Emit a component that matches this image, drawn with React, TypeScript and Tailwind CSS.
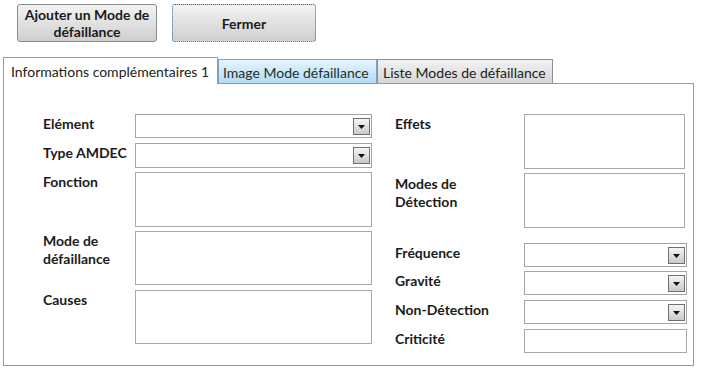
const font = { fontFamily: "Lato, 'Open Sans', sans-serif" };

function Combo({ className = "" }: { className?: string }) {
  return (
    <div className={`relative bg-white border border-[#a5a5a5] ${className}`}>
      <div className="absolute right-[1px] top-[3px] w-[17px] h-[17px] border border-[#6f6f6f] bg-gradient-to-b from-[#f6f6f6] to-[#c9c9c9] flex items-center justify-center">
        <svg width="7" height="4" viewBox="0 0 7 4">
          <path d="M0 0h7L3.5 4z" fill="#111" />
        </svg>
      </div>
    </div>
  );
}

function Box({ className = "" }: { className?: string }) {
  return <div className={`bg-white border border-[#a9a9a9] ${className}`} />;
}

function Label({ children, className = "" }: { children: React.ReactNode; className?: string }) {
  return <div className={`font-bold text-[14px] leading-[18px] text-[#1b1b1b] pt-[1px] ${className}`}>{children}</div>;
}

export default function App() {
  return (
    <div className="w-[724px] h-[390px] bg-white overflow-hidden" style={font}>
      <div className="flex gap-[15px] pl-[17px] pt-[4px]">
        <button className="w-[140px] h-[38px] rounded-[3px] border border-[#8a8a8a] bg-gradient-to-b from-[#f3f3f3] to-[#cfcfcf] font-bold text-[14px] leading-[17px] text-[#1a1a1a]">
          Ajouter un Mode de
          <br />
          défaillance
        </button>
        <button className="w-[144px] h-[38px] rounded-[3px] border border-dotted border-[#3f6680] bg-gradient-to-b from-[#f3f3f3] to-[#cfcfcf] font-bold text-[14px] text-[#1a1a1a]">
          Fermer
        </button>
      </div>

      <div className="ml-[3px] mt-[14px] w-[691px]">
        <div className="flex items-end h-[27px]">
          <div className="w-[215px] h-[27px] -mb-px relative z-10 bg-white border border-b-0 border-[#9a9a9a] pl-[7px] pt-[3px] text-[14px] text-[#222] whitespace-nowrap">
            Informations complémentaires 1
          </div>
          <div className="w-[159px] h-[24px] border border-b-0 border-[#7fa2bd] bg-gradient-to-b from-[#e6f4fd] to-[#b3dbf4] pl-[4px] pt-[2px] text-[14px] text-[#1f2f2a] whitespace-nowrap">
            Image Mode défaillance
          </div>
          <div className="w-[176px] h-[24px] border border-b-0 border-[#8f8f8f] bg-gradient-to-b from-[#f2f2f2] to-[#d6d6d6] pl-[5px] pt-[2px] text-[14px] text-[#222] whitespace-nowrap">
            Liste Modes de défaillance
          </div>
        </div>

        <div className="h-[283px] border border-[#9a9a9a] bg-white flex pt-[30px]">
          <div className="pl-[39px] w-[391px] flex flex-col">
            <div className="flex h-[24px]">
              <Label className="w-[92px]">Elément</Label>
              <Combo className="w-[237px] h-[24px]" />
            </div>
            <div className="flex h-[25px] mt-[5px]">
              <Label className="w-[92px]">Type AMDEC</Label>
              <Combo className="w-[237px] h-[25px]" />
            </div>
            <div className="flex mt-[4px]">
              <Label className="w-[92px]">Fonction</Label>
              <Box className="w-[237px] h-[55px]" />
            </div>
            <div className="flex mt-[4px]">
              <Label className="w-[92px]">
                Mode de
                <br />
                défaillance
              </Label>
              <Box className="w-[237px] h-[54px]" />
            </div>
            <div className="flex mt-[5px]">
              <Label className="w-[92px]">Causes</Label>
              <Box className="w-[237px] h-[54px]" />
            </div>
          </div>

          <div className="flex flex-col">
            <div className="flex">
              <Label className="w-[129px]">Effets</Label>
              <Box className="w-[161px] h-[55px]" />
            </div>
            <div className="flex mt-[4px]">
              <Label className="w-[129px] pt-[2px]">
                Modes de
                <br />
                Détection
              </Label>
              <Box className="w-[161px] h-[55px]" />
            </div>
            <div className="flex mt-[15px]">
              <Label className="w-[129px]">Fréquence</Label>
              <Combo className="w-[163px] h-[24px]" />
            </div>
            <div className="flex mt-[4px]">
              <Label className="w-[129px]">Gravité</Label>
              <Combo className="w-[163px] h-[24px]" />
            </div>
            <div className="flex mt-[5px]">
              <Label className="w-[129px]">Non-Détection</Label>
              <Combo className="w-[163px] h-[24px]" />
            </div>
            <div className="flex mt-[5px]">
              <Label className="w-[129px]">Criticité</Label>
              <Box className="w-[163px] h-[24px]" />
            </div>
          </div>
        </div>
      </div>
    </div>
  );
}
